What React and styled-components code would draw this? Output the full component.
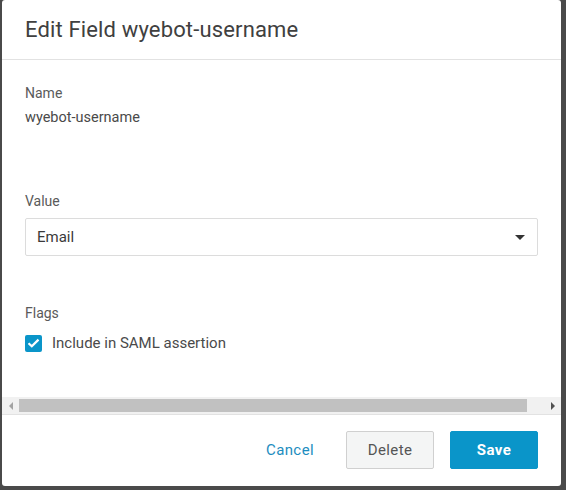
import React from 'react';
import styled, { createGlobalStyle } from 'styled-components';

const GlobalStyle = createGlobalStyle`
  html, body {
    margin: 0;
    padding: 0;
    background: #4a4a4a;
    font-family: Roboto, "Liberation Sans", Arial, sans-serif;
  }
`;

const Backdrop = styled.div`
  width: 566px;
  height: 490px;
  box-sizing: border-box;
  padding: 0 5px 4px 2px;
  background: #4a4a4a;
`;

const Dialog = styled.div`
  display: flex;
  flex-direction: column;
  width: 559px;
  height: 486px;
  background: #fff;
  border-radius: 3px;
  overflow: hidden;
`;

const Header = styled.div`
  display: flex;
  align-items: center;
  height: 59px;
  padding: 0 23px;
  border-bottom: 1px solid #e2e2e2;
`;

const Title = styled.h2`
  margin: 0;
  font-size: 22px;
  font-weight: 400;
  letter-spacing: 0.15px;
  color: #404040;
`;

const Body = styled.div`
  display: flex;
  flex-direction: column;
  height: 337px;
  padding: 25px 23px 0;
  box-sizing: border-box;
`;

const Field = styled.div`
  display: flex;
  flex-direction: column;
  margin-top: ${(p) => p.$gap || 0}px;
`;

const Label = styled.label`
  font-size: 14px;
  line-height: 16px;
  color: #5a5a5a;
`;

const Value = styled.div`
  margin-top: 7px;
  font-size: 14.5px;
  line-height: 20px;
  color: #4a4a4a;
`;

const Select = styled.div`
  display: flex;
  align-items: center;
  justify-content: space-between;
  height: 38px;
  margin-top: 9px;
  padding: 0 12px 0 11px;
  box-sizing: border-box;
  border: 1px solid #dcdcdc;
  border-radius: 2px;
  font-size: 15px;
  color: #3a3a3a;
`;

const Caret = styled.span`
  width: 0;
  height: 0;
  border-left: 5px solid transparent;
  border-right: 5px solid transparent;
  border-top: 5px solid #333;
`;

const CheckRow = styled.div`
  display: flex;
  align-items: center;
  gap: 10px;
  margin-top: 12px;
  height: 20px;
  font-size: 15px;
  color: #4a4a4a;
`;

const Box = styled.span`
  display: flex;
  align-items: center;
  justify-content: center;
  width: 17px;
  height: 17px;
  border-radius: 2px;
  background: #0a95c9;
`;

const ScrollTrack = styled.div`
  display: flex;
  align-items: center;
  height: 17px;
  background: #f1f1f1;
  border-bottom: 1px solid #e2e2e2;
`;

const Arrow = styled.span`
  display: flex;
  align-items: center;
  justify-content: center;
  width: 17px;
  height: 17px;
  &::before {
    content: '';
    width: 0;
    height: 0;
    border-top: 4px solid transparent;
    border-bottom: 4px solid transparent;
    ${(p) =>
      p.$dir === 'left'
        ? 'border-right: 4px solid #a3a3a3;'
        : 'border-left: 4px solid #505050;'}
  }
`;

const Thumb = styled.div`
  height: 13px;
  width: 508px;
  background: #c1c1c1;
`;

const Spacer = styled.div`
  flex: 1;
`;

const Footer = styled.div`
  display: flex;
  align-items: center;
  justify-content: flex-end;
  gap: 16px;
  flex: 1;
  padding: 0 23px 1px;
`;

const Button = styled.button`
  height: 38px;
  padding: 0;
  font-family: inherit;
  font-size: 15px;
  letter-spacing: 0.4px;
  border-radius: 2px;
  cursor: pointer;
  ${(p) =>
    p.$variant === 'primary' &&
    `
    width: 88px;
    background: #0a95c9;
    border: 1px solid #0a95c9;
    color: #fff;
    font-weight: 700;
  `}
  ${(p) =>
    p.$variant === 'secondary' &&
    `
    width: 88px;
    background: #f4f5f5;
    border: 1px solid #d0d0d0;
    color: #555;
  `}
  ${(p) =>
    p.$variant === 'link' &&
    `
    width: 80px;
    background: none;
    border: none;
    color: #1d8dc0;
  `}
`;

const Check = () => (
  <svg width="13" height="10" viewBox="0 0 13 10">
    <path d="M1.5 5.2 L4.8 8.3 L11.5 1.6" fill="none" stroke="#fff" strokeWidth="2.2" />
  </svg>
);

export default function App() {
  return (
    <Backdrop>
      <GlobalStyle />
      <Dialog>
        <Header>
          <Title>Edit Field wyebot-username</Title>
        </Header>
        <Body>
          <Field>
            <Label>Name</Label>
            <Value>wyebot-username</Value>
          </Field>
          <Field $gap={65}>
            <Label>Value</Label>
            <Select>
              <span>Email</span>
              <Caret />
            </Select>
          </Field>
          <Field $gap={49}>
            <Label>Flags</Label>
            <CheckRow>
              <Box>
                <Check />
              </Box>
              Include in SAML assertion
            </CheckRow>
          </Field>
        </Body>
        <ScrollTrack>
          <Arrow $dir="left" />
          <Thumb />
          <Spacer />
          <Arrow $dir="right" />
        </ScrollTrack>
        <Footer>
          <Button $variant="link">Cancel</Button>
          <Button $variant="secondary">Delete</Button>
          <Button $variant="primary">Save</Button>
        </Footer>
      </Dialog>
    </Backdrop>
  );
}
